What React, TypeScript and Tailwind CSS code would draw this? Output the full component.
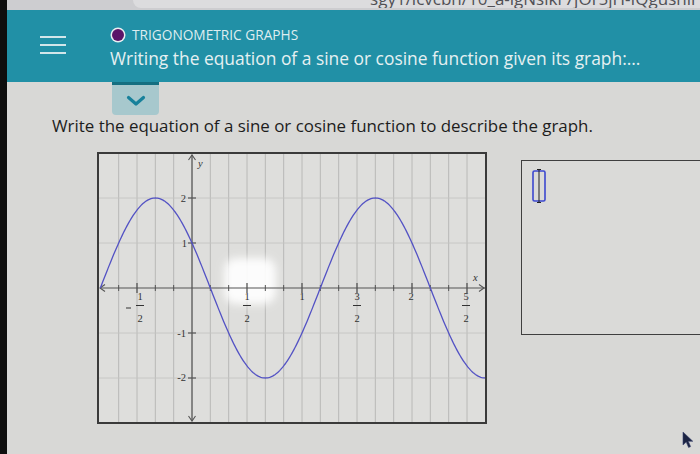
import React from "react";

const ux = (x: number) => 192 + 110 * x;
const uy = (y: number) => 288 - 45 * y;

function Graph() {
  const pts: string[] = [];
  for (let i = 0; i <= 350; i++) {
    const x = -5 / 6 + (i / 350) * (8 / 3 + 5 / 6);
    const y = 2 * Math.cos(Math.PI * (x + 1 / 3));
    pts.push(`${ux(x).toFixed(2)},${uy(y).toFixed(2)}`);
  }
  const ks: number[] = [];
  for (let k = -5; k <= 16; k++) ks.push(k);

  const frac = (cx: number, num: string, minus = false) => (
    <g key={num + cx} fontFamily="'Liberation Serif', serif" fontSize="10.5" fill="#333" textAnchor="middle">
      <text x={cx} y={300}>{num}</text>
      <line x1={cx - 4} x2={cx + 4} y1={305.5} y2={305.5} stroke="#333" strokeWidth="1" />
      <text x={cx} y={322}>2</text>
      {minus && <line x1={cx - 14} x2={cx - 9} y1={308} y2={308} stroke="#333" strokeWidth="1" />}
    </g>
  );

  return (
    <svg width="390" height="272" viewBox="97 152 390 272" className="block shrink-0">
      <defs>
        <filter id="glare" x="-50%" y="-50%" width="200%" height="200%">
          <feGaussianBlur stdDeviation="4" />
        </filter>
      </defs>
      <rect x="98" y="153" width="388" height="270" fill="#dededc" />
      {ks.map((k) => {
        const x = 192 + (k * 110) / 6;
        if (x < 101 || x > 483) return null;
        return <line key={"v" + k} x1={x} x2={x} y1={154} y2={422} stroke="#b4b4b2" strokeWidth="0.9" />;
      })}
      {[2, 1, -1, -2].map((j) => (
        <line key={"h" + j} x1={99} x2={485} y1={uy(j)} y2={uy(j)} stroke="#c4c4c2" strokeWidth="0.9" />
      ))}
      <rect x="224" y="258" width="52" height="46" rx="12" fill="#ffffff" opacity="0.92" filter="url(#glare)" />
      {/* axes */}
      <line x1={100} x2={485} y1={288} y2={288} stroke="#555" strokeWidth="1.2" />
      <line x1={192} x2={192} y1={155} y2={421} stroke="#555" strokeWidth="1.2" />
      <polyline points="105,284.5 100,288 105,291.5" fill="none" stroke="#555" strokeWidth="1.1" />
      <polyline points="479,284.5 484,288 479,291.5" fill="none" stroke="#555" strokeWidth="1.1" />
      <polyline points="188.5,160 192,155 195.5,160" fill="none" stroke="#555" strokeWidth="1.1" />
      <polyline points="188.5,416 192,421 195.5,416" fill="none" stroke="#555" strokeWidth="1.1" />
      {ks.map((k) => {
        if (k === 0) return null;
        const x = 192 + (k * 110) / 6;
        if (x < 103 || x > 480) return null;
        const major = k % 3 === 0;
        return (
          <line
            key={"t" + k}
            x1={x}
            x2={x}
            y1={major ? 283 : 285}
            y2={major ? 293 : 291}
            stroke="#555"
            strokeWidth={major ? 1.3 : 1}
          />
        );
      })}
      {[2, 1, -1, -2].map((j) => (
        <line key={"yt" + j} x1={188} x2={196} y1={uy(j)} y2={uy(j)} stroke="#555" strokeWidth="1.2" />
      ))}
      <polyline points={pts.join(" ")} fill="none" stroke="#5352c4" strokeWidth="1.3" />
      <g fontFamily="'Liberation Serif', serif" fontSize="10.5" fill="#333" textAnchor="end">
        <text x={186} y={202}>2</text>
        <text x={187} y={247}>1</text>
        <text x={186} y={337}>-1</text>
        <text x={186} y={381}>-2</text>
      </g>
      <text x={198} y={167} fontFamily="'Liberation Serif', serif" fontStyle="italic" fontSize="10.5" fill="#333">y</text>
      <text x={473} y={281} fontFamily="'Liberation Serif', serif" fontStyle="italic" fontSize="10.5" fill="#333">x</text>
      {frac(140, "1", true)}
      {frac(247, "1")}
      {frac(357, "3")}
      {frac(466, "5")}
      <g fontFamily="'Liberation Serif', serif" fontSize="10.5" fill="#333" textAnchor="middle">
        <text x={302} y={300}>1</text>
        <text x={411} y={300}>2</text>
      </g>
      <rect x="98" y="153" width="388" height="270" fill="none" stroke="#3a3a3a" strokeWidth="2" />
    </svg>
  );
}

export default function App() {
  return (
    <div
      className="relative flex w-[700px] h-[454px] overflow-hidden bg-[#d8d8d6]"
      style={{ fontFamily: "'Open Sans', 'Noto Sans', sans-serif" }}
    >
      <div className="w-[7px] shrink-0 bg-[#0e0e0e]" />

      <div className="flex flex-col flex-1 min-w-0">
        {/* browser strip */}
        <div className="h-[10px] shrink-0 bg-[#cdcdd0] flex overflow-hidden">
          <div className="ml-[126px] flex-1 h-[8px] rounded-bl-[10px] bg-[#dcdcde] overflow-hidden flex justify-end">
            <span className="-mt-[10px] pr-[2px] text-[17px] leading-[18px] text-[#505055] whitespace-nowrap">
              sgy1/lcvcbh/10_a-lgNsikr7jOr5jH-IQgusnir
            </span>
          </div>
        </div>

        {/* teal header */}
        <header className="h-[72px] shrink-0 bg-[#2190a6] flex items-start">
          <div className="ml-[33px] mt-[26px] flex flex-col gap-[6px]">
            <div className="h-[2px] w-[26px] bg-[#d2e6ea]" />
            <div className="h-[2px] w-[26px] bg-[#d2e6ea]" />
            <div className="h-[2px] w-[26px] bg-[#d2e6ea]" />
          </div>
          <div className="ml-[44px] pt-[17px] flex flex-col">
            <div className="flex items-center gap-[8px] pl-[2px]">
              <span className="block w-[12px] h-[12px] rounded-full bg-[#5a1468] ring-[1.5px] ring-[#e9eef0]" />
              <span className="text-[13.7px] leading-[16px] text-[#deedf0]">
                TRIGONOMETRIC GRAPHS
              </span>
            </div>
            <div className="mt-[4px] text-[17.4px] leading-[22px] text-[#e6f0f2] whitespace-nowrap">
              Writing the equation of a sine or cosine function given its graph:...
            </div>
          </div>
        </header>

        {/* collapse tab */}
        <div className="ml-[105px] w-[47px] h-[33px] shrink-0 rounded-b-[4px] bg-[#a7c8cd] border-t-[3px] border-[#146f81] flex items-center justify-center">
          <svg width="20" height="12" viewBox="0 0 20 12" className="mt-[2px]">
            <polyline points="2.5,2.5 10,9 17.5,2.5" fill="none" stroke="#17819b" strokeWidth="3.2" strokeLinecap="round" strokeLinejoin="round" />
          </svg>
        </div>

        <p className="ml-[45px] text-[16.9px] leading-[22px] text-[#1d1d1d] whitespace-nowrap">
          Write the equation of a sine or cosine function to describe the graph.
        </p>

        <div className="mt-[15px] ml-[90px] flex items-start">
          <Graph />
          <div className="ml-[34px] mt-[8px] w-[200px] h-[175px] shrink-0 border-[1.5px] border-[#3f3f3f] bg-[#dadad8] pl-[9px] pt-[7px]">
            <svg width="16" height="36" viewBox="0 0 16 36">
              <rect x="2" y="3" width="12" height="30" rx="1.5" fill="none" stroke="#3c48cf" strokeWidth="1.6" />
              <line x1="8" x2="8" y1="1" y2="35" stroke="#222" strokeWidth="1" />
              <line x1="6" x2="10" y1="1.5" y2="1.5" stroke="#222" strokeWidth="1" />
              <line x1="6" x2="10" y1="34.5" y2="34.5" stroke="#222" strokeWidth="1" />
            </svg>
          </div>
        </div>
      </div>

      {/* mouse pointer */}
      <svg width="12" height="18" viewBox="0 0 12 18" className="absolute left-[682px] top-[431px]">
        <path d="M1 1 L1 14 L4.2 11 L6.6 16.5 L8.6 15.6 L6.3 10.3 L10.8 10.3 Z" fill="#1b2342" stroke="#3a4470" strokeWidth="0.6" />
      </svg>
    </div>
  );
}
